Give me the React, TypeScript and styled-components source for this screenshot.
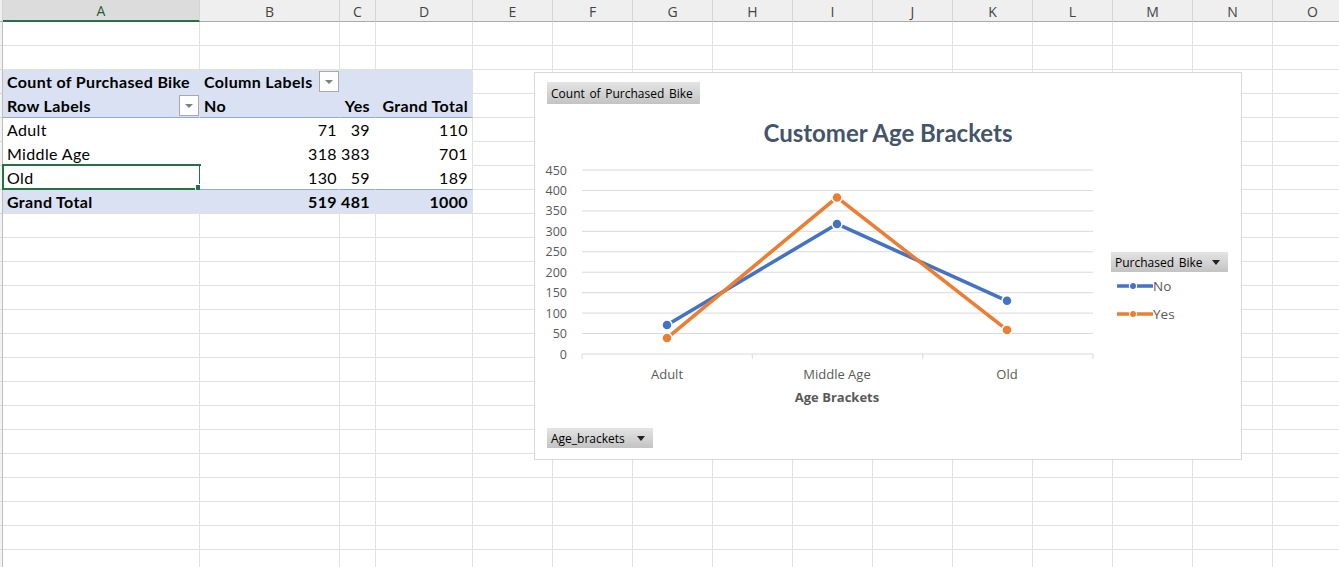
import React from 'react';
import styled, { createGlobalStyle } from 'styled-components';

const GlobalStyle = createGlobalStyle`
  html, body { margin: 0; padding: 0; background: #ffffff; overflow: hidden; }
  body { font-family: Lato, "Liberation Sans", sans-serif; }
  * { box-sizing: border-box; }
`;

const LETTERS = ['A', 'B', 'C', 'D', 'E', 'F', 'G', 'H', 'I', 'J', 'K', 'L', 'M', 'N', 'O'];
const WIDTHS: Record<string, number> = { A: 197, B: 140, C: 36, D: 97 };
const COLS = [{ key: '', w: 3 }, ...LETTERS.map((k) => ({ key: k, w: WIDTHS[k] ?? 80 }))];
const TEMPLATE = COLS.map((c) => `${c.w}px`).join(' ');

const GRID = '#e1e1e1';
const PIVOT_BLUE = '#d9e1f2';
const PIVOT_LINE = '#8ea9db';
const GREEN = '#217346';

const Sheet = styled.div`
  position: relative;
  width: 1339px;
  height: 567px;
  overflow: hidden;
`;

const HeaderRow = styled.div`
  display: grid;
  grid-template-columns: ${TEMPLATE};
  height: 22px;
`;

const HeaderCell = styled.div<{ $selected?: boolean }>`
  display: flex;
  align-items: center;
  justify-content: center;
  background: ${(p) => (p.$selected ? '#dcdcdc' : '#efefef')};
  border-right: 1px solid #d4d4d4;
  border-bottom: ${(p) => (p.$selected ? `2px solid ${GREEN}` : '1px solid #ababab')};
  font-family: "Open Sans", "Liberation Sans", sans-serif;
  font-size: 14px;
  color: ${(p) => (p.$selected ? '#1e5e3a' : '#444444')};
  padding-top: 1px;
`;

const GridRow = styled.div`
  display: grid;
  grid-template-columns: ${TEMPLATE};
  height: 24px;
`;

const Cell = styled.div<{
  $fill: string;
  $vline: string;
  $hline: string;
  $align: 'left' | 'right' | 'split';
  $bold?: boolean;
  $padR: number;
}>`
  position: relative;
  display: flex;
  align-items: center;
  justify-content: ${(p) => (p.$align === 'right' ? 'flex-end' : p.$align === 'split' ? 'space-between' : 'flex-start')};
  background: ${(p) => p.$fill};
  border-right: 1px solid ${(p) => p.$vline};
  border-bottom: 1px solid ${(p) => p.$hline};
  padding: 0 ${(p) => p.$padR}px 0 4px;
  font-size: 16px;
  letter-spacing: 0.35px;
  font-weight: ${(p) => (p.$bold ? 700 : 400)};
  color: #000000;
  white-space: nowrap;
`;

const StubCell = styled.div`
  border-right: 1px solid #bdbdbd;
  border-bottom: 1px solid #d4d4d4;
  background: #f3f3f3;
`;

const DropButton = styled.span`
  display: flex;
  align-items: center;
  justify-content: center;
  width: 20px;
  height: 21px;
  background: #fdfdfd;
  border: 1px solid #a9a9a9;
  flex-shrink: 0;
  &::after {
    content: '';
    border-left: 4px solid transparent;
    border-right: 4px solid transparent;
    border-top: 4px solid #7f7f7f;
  }
`;

const Selection = styled.div`
  position: absolute;
  top: -2px;
  left: -1px;
  right: -2px;
  bottom: -1px;
  border: 2px solid ${GREEN};
  pointer-events: none;
  &::after {
    content: '';
    position: absolute;
    right: -5px;
    bottom: -5px;
    width: 7px;
    height: 7px;
    background: ${GREEN};
    border: 1px solid #ffffff;
  }
`;

/* ---------- chart ---------- */

const ChartBox = styled.div`
  position: absolute;
  left: 534px;
  top: 72px;
  width: 708px;
  height: 388px;
  background: #ffffff;
  border: 1px solid #d9d9d9;
  display: flex;
  flex-direction: column;
  align-items: flex-start;
  padding-top: 9px;
`;

const FieldButton = styled.div<{ $w: number; $h: number }>`
  display: flex;
  align-items: center;
  justify-content: space-between;
  width: ${(p) => p.$w}px;
  height: ${(p) => p.$h}px;
  padding: 0 8px 0 4px;
  background: linear-gradient(to bottom, #e4e4e4, #c3c3c3);
  font-family: "Open Sans", "Liberation Sans", sans-serif;
  font-size: 12px;
  word-spacing: 1.5px;
  color: #000000;
  white-space: nowrap;
`;

const Caret = styled.span`
  border-left: 4px solid transparent;
  border-right: 4px solid transparent;
  border-top: 5px solid #222222;
`;

const TopButtonSlot = styled.div`
  margin-left: 12px;
`;

const BottomButtonSlot = styled.div`
  margin: 16px 0 0 12px;
`;

const Title = styled.div`
  align-self: stretch;
  margin-top: 14px;
  height: 30px;
  line-height: 30px;
  text-align: center;
  font-family: Lato, "Liberation Sans", sans-serif;
  font-weight: 700;
  font-size: 24px;
  color: #44546a;
`;

const Body = styled.div`
  display: flex;
  align-items: flex-start;
`;

const Plot = styled.svg`
  display: block;
  width: 564px;
  height: 264px;
  text {
    font-family: "Open Sans", "Liberation Sans", sans-serif;
    fill: #595959;
  }
`;

const Legend = styled.div`
  margin: 104px 0 0 12px;
  display: flex;
  flex-direction: column;
`;

const LegendEntry = styled.div`
  display: flex;
  align-items: center;
  height: 28px;
  padding-left: 6px;
  font-family: "Open Sans", "Liberation Sans", sans-serif;
  font-size: 13.5px;
  color: #595959;
`;

const BLUE = '#4472c4';
const ORANGE = '#ed7d31';

const CATS = ['Adult', 'Middle Age', 'Old'];
const CAT_X = [132, 302, 472];
const SERIES = [
  { name: 'No', color: BLUE, values: [71, 318, 130] },
  { name: 'Yes', color: ORANGE, values: [39, 383, 59] },
];
const yOf = (v: number) => 206 - v * (184 / 450);

function Swatch({ color }: { color: string }) {
  return (
    <svg width="36" height="10" viewBox="0 0 36 10">
      <line x1="1" y1="5" x2="35" y2="5" stroke={color} strokeWidth="3.5" strokeLinecap="round" />
      <circle cx="16" cy="5" r="3.6" fill={color} stroke="#ffffff" strokeWidth="1.2" />
    </svg>
  );
}

function Chart() {
  const ticks = [0, 50, 100, 150, 200, 250, 300, 350, 400, 450];
  const bounds = [47, 217.3, 387.7, 558];
  return (
    <ChartBox>
      <TopButtonSlot>
        <FieldButton $w={153} $h={22}>Count of Purchased Bike</FieldButton>
      </TopButtonSlot>
      <Title>Customer Age Brackets</Title>
      <Body>
        <Plot viewBox="0 0 564 264">
          {ticks.map((t) => (
            <g key={t}>
              <line x1="47" x2="558" y1={yOf(t)} y2={yOf(t)} stroke="#d9d9d9" strokeWidth="1" />
              <text x="32" y={yOf(t) + 4.5} fontSize="12.5" textAnchor="end">
                {t}
              </text>
            </g>
          ))}
          {bounds.map((b) => (
            <line key={b} x1={b} x2={b} y1={206} y2={211} stroke="#d9d9d9" strokeWidth="1" />
          ))}
          {SERIES.map((s) => (
            <polyline
              key={s.name}
              points={s.values.map((v, i) => `${CAT_X[i]},${yOf(v)}`).join(' ')}
              fill="none"
              stroke={s.color}
              strokeWidth="3.6"
              strokeLinejoin="round"
              strokeLinecap="round"
            />
          ))}
          {SERIES.map((s) =>
            s.values.map((v, i) => (
              <circle
                key={`${s.name}-${i}`}
                cx={CAT_X[i]}
                cy={yOf(v)}
                r="5"
                fill={s.color}
                stroke="#ffffff"
                strokeWidth="1.5"
              />
            ))
          )}
          {CATS.map((c, i) => (
            <text key={c} x={CAT_X[i]} y={230.5} fontSize="13" textAnchor="middle">
              {c}
            </text>
          ))}
          <text x={302} y={253.5} fontSize="13" fontWeight="700" textAnchor="middle">
            Age Brackets
          </text>
        </Plot>
        <Legend>
          <FieldButton $w={117} $h={20}>
            Purchased Bike
            <Caret />
          </FieldButton>
          {SERIES.map((s) => (
            <LegendEntry key={s.name}>
              <Swatch color={s.color} />
              {s.name}
            </LegendEntry>
          ))}
        </Legend>
      </Body>
      <BottomButtonSlot>
        <FieldButton $w={106} $h={20}>
          Age_brackets
          <Caret />
        </FieldButton>
      </BottomButtonSlot>
    </ChartBox>
  );
}

/* ---------- pivot definition ---------- */

type Spec = { text?: string; align?: 'left' | 'right'; drop?: boolean; selected?: boolean };
type PivotRow = { fill: string; bottom: string; bold?: boolean; cells: Record<string, Spec> };

const num = (t: string): Spec => ({ text: t, align: 'right' });

const PIVOT: Record<number, PivotRow> = {
  3: {
    fill: PIVOT_BLUE,
    bottom: PIVOT_BLUE,
    bold: true,
    cells: { A: { text: 'Count of Purchased Bike' }, B: { text: 'Column Labels', drop: true } },
  },
  4: {
    fill: PIVOT_BLUE,
    bottom: PIVOT_LINE,
    bold: true,
    cells: {
      A: { text: 'Row Labels', drop: true },
      B: { text: 'No' },
      C: { text: 'Yes', align: 'right' },
      D: { text: 'Grand Total', align: 'right' },
    },
  },
  5: { fill: '#ffffff', bottom: '#ffffff', cells: { A: { text: 'Adult' }, B: num('71'), C: num('39'), D: num('110') } },
  6: { fill: '#ffffff', bottom: '#ffffff', cells: { A: { text: 'Middle Age' }, B: num('318'), C: num('383'), D: num('701') } },
  7: {
    fill: '#ffffff',
    bottom: PIVOT_LINE,
    cells: { A: { text: 'Old', selected: true }, B: num('130'), C: num('59'), D: num('189') },
  },
  8: {
    fill: PIVOT_BLUE,
    bottom: GRID,
    bold: true,
    cells: { A: { text: 'Grand Total' }, B: num('519'), C: num('481'), D: num('1000') },
  },
};

const PAD_R: Record<string, number> = { A: 1, B: 2, C: 5, D: 4 };
const PIVOT_COLS = ['A', 'B', 'C', 'D'];

function SheetRow({ index }: { index: number }) {
  const p = PIVOT[index];
  return (
    <GridRow>
      <StubCell />
      {LETTERS.map((col) => {
        const inPivot = p && PIVOT_COLS.includes(col);
        if (!inPivot) {
          return <Cell key={col} $fill="#ffffff" $vline={GRID} $hline={GRID} $align="left" $padR={0} />;
        }
        const s = p.cells[col] ?? {};
        const align = s.drop ? 'split' : s.align ?? 'left';
        return (
          <Cell
            key={col}
            $fill={p.fill}
            $vline={col === 'D' ? GRID : p.fill}
            $hline={p.bottom}
            $align={align}
            $bold={p.bold}
            $padR={s.drop ? 0 : PAD_R[col]}
          >
            {s.text && <span>{s.text}</span>}
            {s.drop && <DropButton />}
            {s.selected && <Selection />}
          </Cell>
        );
      })}
    </GridRow>
  );
}

export default function App() {
  const rows = Array.from({ length: 23 }, (_, i) => i + 1);
  return (
    <Sheet>
      <GlobalStyle />
      <HeaderRow>
        <HeaderCell />
        {LETTERS.map((l) => (
          <HeaderCell key={l} $selected={l === 'A'}>
            {l}
          </HeaderCell>
        ))}
      </HeaderRow>
      {rows.map((r) => (
        <SheetRow key={r} index={r} />
      ))}
      <Chart />
    </Sheet>
  );
}
